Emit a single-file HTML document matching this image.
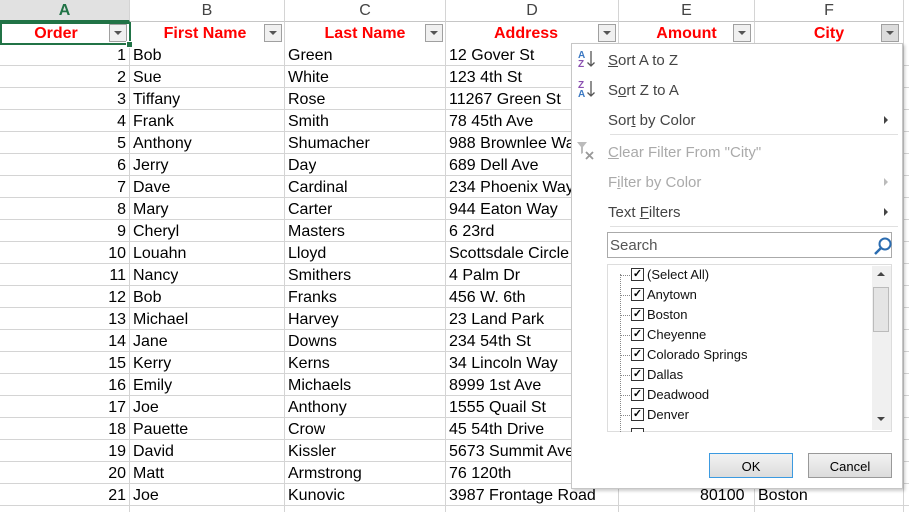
<!DOCTYPE html>
<html><head><style>
body{margin:0;width:909px;height:503px;overflow:hidden;background:#fff;font-family:"Liberation Sans",sans-serif;position:relative}
.a{position:absolute}
.colh{position:absolute;top:0;height:21px;border-right:1px solid #d4d4d4;border-bottom:1px solid #c6c6c6;background:#fff;color:#444;font-size:16px;text-align:center;line-height:22px}
.vl{position:absolute;top:22px;height:490px;width:1px;background:#d4d4d4}
.hl{position:absolute;left:0;width:909px;height:1px;background:#d4d4d4}
.cell{position:absolute;height:22px;line-height:24px;font-size:16px;color:#000;white-space:nowrap;overflow:hidden}
.hd{position:absolute;top:22px;height:22px;line-height:24px;font-size:16px;font-weight:bold;color:#f00;text-align:center}
.dd{position:absolute;top:24px;width:18px;height:18px;border:1px solid #a0a0a0;background:#f0f0f0;box-sizing:border-box}
.dd:after{content:"";position:absolute;left:4px;top:6px;border-left:4px solid transparent;border-right:4px solid transparent;border-top:4px solid #555}
.mi{position:absolute;left:608px;font-size:15px;color:#444}
.gr{color:#aaa}
.arr{position:absolute;left:884px;width:0;height:0;border-top:4px solid transparent;border-bottom:4px solid transparent;border-left:4px solid #444}
.cb{position:absolute;left:631px;width:11px;height:11px;border:1px solid #333;background:#fff;font-size:11px;line-height:11px;text-align:center;font-weight:bold}
.ct{position:absolute;left:647px;font-size:13px;color:#111}
</style></head><body>
<div class="colh" style="left:0;width:129px;background:#e1e1e1;color:#217346;font-weight:bold;border-bottom:2px solid #217346;height:20px">A</div>
<div class="colh" style="left:130px;width:154px">B</div>
<div class="colh" style="left:285px;width:160px">C</div>
<div class="colh" style="left:446px;width:172px">D</div>
<div class="colh" style="left:619px;width:135px">E</div>
<div class="colh" style="left:755px;width:148px">F</div>
<div class="vl" style="left:129px"></div><div class="vl" style="left:284px"></div><div class="vl" style="left:445px"></div><div class="vl" style="left:618px"></div><div class="vl" style="left:754px"></div><div class="vl" style="left:903px"></div>
<div id="lines"></div>
<div class="hd" style="left:0;width:112px">Order</div>
<div class="hd" style="left:130px;width:150px">First Name</div>
<div class="hd" style="left:285px;width:160px">Last Name</div>
<div class="hd" style="left:446px;width:160px">Address</div>
<div class="hd" style="left:619px;width:135px">Amount</div>
<div class="hd" style="left:755px;width:148px">City</div>
<div class="dd" style="left:109px"></div><div class="dd" style="left:264px"></div><div class="dd" style="left:425px"></div><div class="dd" style="left:598px"></div><div class="dd" style="left:733px"></div><div class="dd" style="left:881px;background:#dcdcdc"></div>
<div class="a" style="left:0;top:22px;width:127px;height:19px;border:2px solid #217346"></div>
<div class="a" style="left:126px;top:41px;width:5px;height:5px;background:#217346;border:1px solid #fff"></div>
<div id="rows"></div>
<script>
var d=[["Bob","Green","12 Gover St"],["Sue","White","123 4th St"],["Tiffany","Rose","11267 Green St"],["Frank","Smith","78 45th Ave"],["Anthony","Shumacher","988 Brownlee Way"],["Jerry","Day","689 Dell Ave"],["Dave","Cardinal","234 Phoenix Way"],["Mary","Carter","944 Eaton Way"],["Cheryl","Masters","6 23rd"],["Louahn","Lloyd","Scottsdale Circle"],["Nancy","Smithers","4 Palm Dr"],["Bob","Franks","456 W. 6th"],["Michael","Harvey","23 Land Park"],["Jane","Downs","234 54th St"],["Kerry","Kerns","34 Lincoln Way"],["Emily","Michaels","8999 1st Ave"],["Joe","Anthony","1555 Quail St"],["Pauette","Crow","45 54th Drive"],["David","Kissler","5673 Summit Ave"],["Matt","Armstrong","76 120th"],["Joe","Kunovic","3987 Frontage Road"]];
var h="",l="";
for(var i=0;i<21;i++){var t=44+22*i;
l+='<div class="hl" style="top:'+(t+21)+'px"></div>';
h+='<div class="cell" style="left:0;width:126px;text-align:right;top:'+t+'px">'+(i+1)+'</div>';
h+='<div class="cell" style="left:133px;top:'+t+'px">'+d[i][0]+'</div>';
h+='<div class="cell" style="left:288px;top:'+t+'px">'+d[i][1]+'</div>';
h+='<div class="cell" style="left:449px;width:168px;top:'+t+'px">'+d[i][2]+'</div>';}
h+='<div class="cell" style="left:700px;top:484px">80100</div><div class="cell" style="left:758px;top:484px">Boston</div>';
document.getElementById("rows").innerHTML=h;document.getElementById("lines").innerHTML=l;
</script>
<div class="a" style="left:571px;top:43px;width:330px;height:444px;background:#fff;border:1px solid #c6c6c6;box-shadow:2px 2px 3px rgba(0,0,0,.2)"></div>
<div class="a" style="left:578px;top:51px;font-size:10px;line-height:9px;font-weight:bold"><span style="color:#3b78c2">A</span><br><span style="color:#8a4fb0">Z</span></div>
<svg class="a" style="left:586px;top:50px" width="10" height="18"><path d="M5 1V16M1.5 12.5L5 16L8.5 12.5" fill="none" stroke="#555" stroke-width="1.3"/></svg>
<div class="a" style="left:578px;top:81px;font-size:10px;line-height:9px;font-weight:bold"><span style="color:#8a4fb0">Z</span><br><span style="color:#3b78c2">A</span></div>
<svg class="a" style="left:586px;top:80px" width="10" height="18"><path d="M5 1V16M1.5 12.5L5 16L8.5 12.5" fill="none" stroke="#555" stroke-width="1.3"/></svg>
<div class="mi" style="top:52px"><u>S</u>ort A to Z</div>
<div class="mi" style="top:82px">S<u>o</u>rt Z to A</div>
<div class="mi" style="top:112px">Sor<u>t</u> by Color</div><div class="arr" style="top:116px"></div>
<div class="a" style="left:610px;top:134px;width:288px;height:1px;background:#e0e0e0"></div>
<svg class="a" style="left:576px;top:141px" width="20" height="20"><path d="M1 1H11L7 6V12L5 13V6Z" fill="#bbb"/><path d="M10 11L17 18M17 11L10 18" stroke="#999" stroke-width="1.8"/></svg>
<div class="mi gr" style="top:144px"><u>C</u>lear Filter From "City"</div>
<div class="mi gr" style="top:174px">F<u>i</u>lter by Color</div><div class="arr" style="top:178px;border-left-color:#bbb"></div>
<div class="mi" style="top:204px">Text <u>F</u>ilters</div><div class="arr" style="top:208px"></div>
<div class="a" style="left:610px;top:226px;width:288px;height:1px;background:#e0e0e0"></div>
<div class="a" style="left:607px;top:232px;width:285px;height:26px;border:1px solid #aaa;box-sizing:border-box"></div>
<div class="mi" style="left:610px;top:237px;color:#555">Search</div>
<svg class="a" style="left:873px;top:236px" width="20" height="20"><circle cx="12" cy="8" r="5.5" fill="none" stroke="#2b6cb0" stroke-width="2"/><line x1="8" y1="12" x2="2" y2="18" stroke="#2b6cb0" stroke-width="2.5"/></svg>
<div class="a" style="left:607px;top:264px;width:285px;height:168px;border:1px solid #ddd;box-sizing:border-box;overflow:hidden"></div>
<div class="a" style="left:620px;top:274px;width:0;height:158px;border-left:1px dotted #888"></div>
<div id="cl"></div>
<div class="a" style="left:872px;top:266px;width:19px;height:164px;background:#f0f0f0"></div>
<div class="a" style="left:877px;top:272px;border-left:4px solid transparent;border-right:4px solid transparent;border-bottom:4px solid #444"></div>
<div class="a" style="left:877px;top:417px;border-left:4px solid transparent;border-right:4px solid transparent;border-top:4px solid #444"></div>
<div class="a" style="left:873px;top:287px;width:16px;height:45px;background:#e4e4e4;border:1px solid #bbb;box-sizing:border-box"></div>
<div class="a" style="left:709px;top:453px;width:84px;height:25px;border:1px solid #3c9ae0;background:linear-gradient(#f2f2f2,#dcdcdc);font-size:13px;text-align:center;line-height:25px;box-sizing:border-box">OK</div>
<div class="a" style="left:808px;top:453px;width:84px;height:25px;border:1px solid #999;background:linear-gradient(#f2f2f2,#dcdcdc);font-size:13px;text-align:center;line-height:25px;box-sizing:border-box">Cancel</div>
<script>
var c=["(Select All)","Anytown","Boston","Cheyenne","Colorado Springs","Dallas","Deadwood","Denver"],s="";
for(var i=0;i<c.length;i++){var t=268+20*i;s+='<div class="a" style="left:621px;top:'+(t+7)+'px;width:9px;border-top:1px dotted #888"></div><div class="cb" style="top:'+t+'px">✓</div><div class="ct" style="top:'+(t-1)+'px">'+c[i]+'</div>';}
s+='<div class="cb" style="top:428px;height:3px;border-bottom:none"></div>';
document.getElementById("cl").innerHTML=s;
</script>
</body></html>
